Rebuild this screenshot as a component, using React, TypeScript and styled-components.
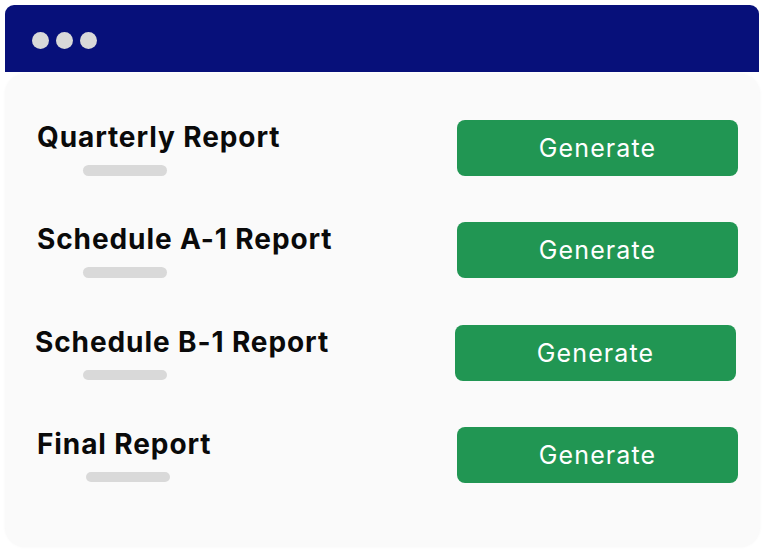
import React from 'react'
import styled, { createGlobalStyle } from 'styled-components'

const navy = '#07107a'
const green = '#219653'
const grey = '#d9d9d9'
const panel = '#fafafa'

const GlobalStyle = createGlobalStyle`
  html, body {
    margin: 0;
    padding: 0;
    background: #ffffff;
  }
  body {
    font-family: Inter, 'Noto Sans', 'Liberation Sans', sans-serif;
  }
`

const Page = styled.div`
  width: 768px;
  height: 559px;
  box-sizing: border-box;
  padding: 5px 8px 12px 5px;
  display: flex;
  flex-direction: column;
  gap: 2px;
`

const TitleBar = styled.div`
  height: 67px;
  width: 754px;
  background: ${navy};
  border-radius: 9px 9px 0 0;
  display: flex;
  align-items: center;
  gap: 7px;
  padding: 4px 0 0 27px;
  box-sizing: border-box;
`

const Dot = styled.span`
  width: 17px;
  height: 17px;
  border-radius: 50%;
  background: ${grey};
`

const Panel = styled.div`
  flex: 1;
  background: ${panel};
  border-radius: 20px;
  box-shadow: 0 0 3px rgba(0, 0, 0, 0.04);
  box-sizing: border-box;
  padding: 46px 22px 0 32px;
  display: flex;
  flex-direction: column;
  gap: 46.3px;
`

const Row = styled.div`
  display: flex;
  justify-content: space-between;
  align-items: flex-start;
  height: 56px;
`

const Label = styled.div<{ $shift?: number }>`
  display: flex;
  flex-direction: column;
  margin-left: ${p => p.$shift ?? 0}px;
`

const Title = styled.h2`
  margin: 3px 0 0;
  font-size: 28px;
  line-height: 28px;
  font-weight: 700;
  color: #0a0a0a;
  letter-spacing: 0.9px;
  white-space: nowrap;
`

const Bar = styled.span<{ $shift?: number }>`
  display: block;
  width: 84px;
  height: 10.5px;
  margin: 14px 0 0 ${p => 46 + (p.$shift ?? 0)}px;
  border-radius: 6px;
  background: ${grey};
`

const Button = styled.button<{ $shift?: number }>`
  width: 281px;
  height: 56px;
  margin-right: ${p => -(p.$shift ?? 0)}px;
  border: none;
  border-radius: 8px;
  background: ${green};
  color: #ffffff;
  font-family: inherit;
  font-size: 25px;
  font-weight: 400;
  letter-spacing: 1.1px;
  cursor: pointer;
`

type Report = {
  title: string
  titleShift?: number
  barShift?: number
  buttonShift?: number
}

const reports: Report[] = [
  { title: 'Quarterly Report' },
  { title: 'Schedule A-1 Report' },
  { title: 'Schedule B-1 Report', titleShift: -2, barShift: 2, buttonShift: -2 },
  { title: 'Final Report', barShift: 3 },
]

const App = () => (
  <>
    <GlobalStyle />
    <Page>
      <TitleBar>
        <Dot />
        <Dot />
        <Dot />
      </TitleBar>
      <Panel>
        {reports.map(r => (
          <Row key={r.title}>
            <Label $shift={r.titleShift}>
              <Title>{r.title}</Title>
              <Bar $shift={r.barShift} />
            </Label>
            <Button $shift={r.buttonShift}>Generate</Button>
          </Row>
        ))}
      </Panel>
    </Page>
  </>
)

export default App
